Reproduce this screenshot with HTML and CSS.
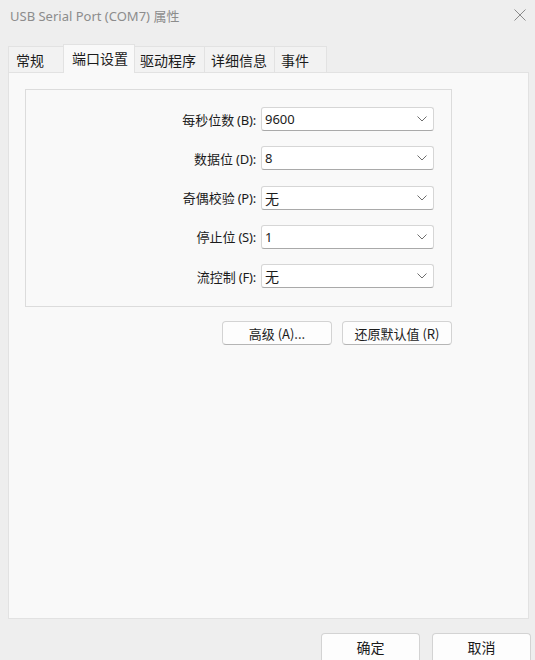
FILE: index.html
```html
<!DOCTYPE html>
<html lang="zh-CN">
<head>
<meta charset="utf-8">
<title>USB Serial Port (COM7) 属性</title>
<link rel="stylesheet" href="styles.css">
</head>
<body>
<div class="window">
  <div class="titlebar">
    <span class="title">USB Serial Port (COM7) 属性</span>
    <svg class="close" width="12" height="12" viewBox="0 0 12 12"><path d="M0.5 0.5 L11.5 11.5 M11.5 0.5 L0.5 11.5" stroke="#8a8a8a" stroke-width="1" fill="none"/></svg>
  </div>
  <div class="tabs">
    <div class="tab t1">常规</div>
    <div class="tab t2 active">端口设置</div>
    <div class="tab t3">驱动程序</div>
    <div class="tab t4">详细信息</div>
    <div class="tab t5">事件</div>
  </div>
  <div class="panel">
    <div class="group">
      <div class="row"><span class="label">每秒位数 <span class="lat">(B):</span></span><div class="combo"><span class="val">9600</span><svg class="chev" width="10" height="6" viewBox="0 0 10 6"><path d="M0.5 0.5 L5 5 L9.5 0.5" stroke="#6e6e6e" fill="none" stroke-width="1"/></svg></div></div>
      <div class="row"><span class="label">数据位 <span class="lat">(D):</span></span><div class="combo"><span class="val">8</span><svg class="chev" width="10" height="6" viewBox="0 0 10 6"><path d="M0.5 0.5 L5 5 L9.5 0.5" stroke="#6e6e6e" fill="none" stroke-width="1"/></svg></div></div>
      <div class="row"><span class="label">奇偶校验 <span class="lat">(P):</span></span><div class="combo"><span class="val cjk">无</span><svg class="chev" width="10" height="6" viewBox="0 0 10 6"><path d="M0.5 0.5 L5 5 L9.5 0.5" stroke="#6e6e6e" fill="none" stroke-width="1"/></svg></div></div>
      <div class="row"><span class="label">停止位 <span class="lat">(S):</span></span><div class="combo"><span class="val">1</span><svg class="chev" width="10" height="6" viewBox="0 0 10 6"><path d="M0.5 0.5 L5 5 L9.5 0.5" stroke="#6e6e6e" fill="none" stroke-width="1"/></svg></div></div>
      <div class="row"><span class="label">流控制 <span class="lat">(F):</span></span><div class="combo"><span class="val cjk">无</span><svg class="chev" width="10" height="6" viewBox="0 0 10 6"><path d="M0.5 0.5 L5 5 L9.5 0.5" stroke="#6e6e6e" fill="none" stroke-width="1"/></svg></div></div>
    </div>
    <div class="actions">
      <button class="btn adv">高级 (A)...</button>
      <button class="btn reset">还原默认值 (R)</button>
    </div>
  </div>
  <div class="footer">
    <button class="btn big">确定</button>
    <button class="btn big">取消</button>
  </div>
</div>
</body>
</html>
```

FILE: styles.css
```css
html, body {
  margin: 0;
  padding: 0;
}
body {
  background: #eeeeee;
  font-family: "Noto Sans", "Noto Sans CJK SC", sans-serif;
  color: #1b1b1b;
  width: 535px;
  height: 660px;
  overflow: hidden;
}
.window {
  display: flex;
  flex-direction: column;
  width: 535px;
  height: 660px;
}
.titlebar {
  height: 30px;
  display: flex;
  align-items: center;
  justify-content: space-between;
  padding: 0 9px 0 10px;
  flex: none;
}
.title {
  font-size: 13px;
  color: #8c8c8c;
}
.close {
  display: block;
}
.tabs {
  display: flex;
  align-items: flex-end;
  margin: 14px 0 0 8px;
  height: 28px;
  flex: none;
  position: relative;
  z-index: 1;
}
.tab {
  box-sizing: border-box;
  height: 26px;
  border: 1px solid #e2e2e2;
  border-bottom: none;
  background: #f2f2f2;
  font-size: 14px;
  font-family: "Noto Sans CJK SC", sans-serif;
  line-height: 26px;
  padding-left: 7px;
  margin-left: -1px;
  color: #1b1b1b;
}
.t1 { width: 56px; margin-left: 0; }
.t2 { width: 72px; }
.t3 { width: 71px; padding-left: 5px; }
.t4 { width: 71px; padding-left: 6px; }
.t5 { width: 53px; padding-left: 6px; }
.tab.active {
  height: 29px;
  background: #f9f9f9;
  line-height: 27px;
  margin-bottom: -1px;
  padding-left: 8px;
}
.panel {
  box-sizing: border-box;
  margin: 0 6px 0 8px;
  height: 547px;
  background: #f9f9f9;
  border: 1px solid #e2e2e2;
  padding: 16px 0 0 16px;
  flex: none;
}
.group {
  box-sizing: border-box;
  width: 427px;
  height: 218px;
  border: 1px solid #dcdcdc;
  padding-top: 17px;
  display: flex;
  flex-direction: column;
  gap: 15.3px;
}
.row {
  display: grid;
  grid-template-columns: 230px 173px;
  column-gap: 5px;
  align-items: center;
  height: 24px;
}
.label {
  text-align: right;
  font-size: 13px;
  font-family: "Noto Sans CJK SC", sans-serif;
  white-space: nowrap;
}
.lat {
  font-family: "Noto Sans", sans-serif;
  font-size: 13px;
  letter-spacing: -0.2px;
}
.combo {
  box-sizing: border-box;
  height: 24px;
  background: #ffffff;
  border: 1px solid #d6d6d6;
  border-bottom-color: #a9a9a9;
  border-radius: 3px;
  display: flex;
  align-items: center;
  justify-content: space-between;
  padding: 0 6px 0 3px;
}
.val {
  font-size: 13px;
  color: #1b1b1b;
}
.val.cjk {
  font-family: "Noto Sans CJK SC", sans-serif;
  font-size: 14px;
}
.chev {
  display: block;
}
.actions {
  display: flex;
  gap: 10px;
  width: 427px;
  justify-content: flex-end;
  margin-top: 14px;
}
.btn {
  box-sizing: border-box;
  background: #fdfdfd;
  border: 1px solid #d3d3d3;
  border-bottom-color: #b5b5b5;
  border-radius: 4px;
  font-family: "Noto Sans CJK SC", sans-serif;
  font-size: 13px;
  color: #1b1b1b;
  padding: 0;
  margin: 0;
  height: 24px;
}
.adv { width: 110px; }
.reset { width: 110px; }
.footer {
  display: flex;
  justify-content: flex-end;
  gap: 12px;
  padding-right: 4px;
  margin-top: 14px;
  flex: none;
}
.btn.big {
  width: 99px;
  height: 32px;
  font-size: 14px;
  padding-bottom: 4px;
}
```
